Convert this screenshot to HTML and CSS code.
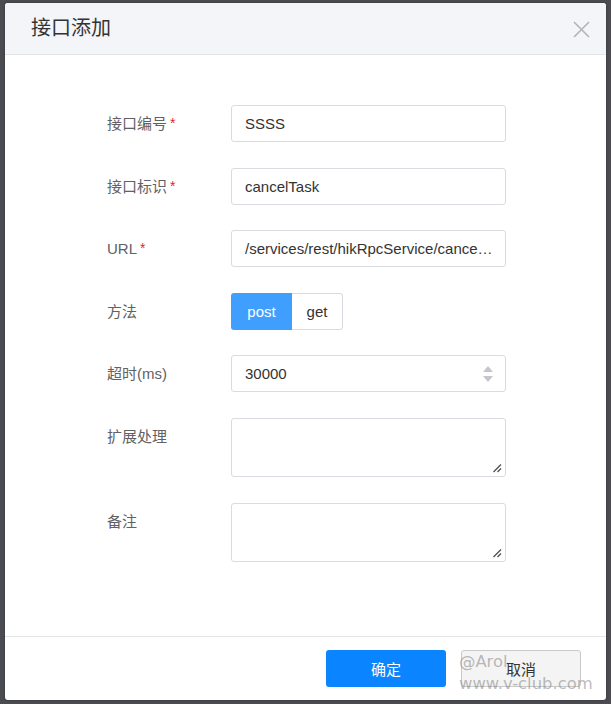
FILE: index.html
```html
<!DOCTYPE html>
<html lang="zh-CN">
<head>
<meta charset="utf-8">
<title>接口添加</title>
<link rel="stylesheet" href="styles.css">
</head>
<body>
<div class="modal">
  <div class="modal-header">
    <span class="modal-title">接口添加</span>
    <svg class="close" width="17" height="17" viewBox="0 0 17 17"><path d="M1 1L16 16M16 1L1 16" stroke="#b4b4b4" stroke-width="1.6" fill="none"/></svg>
  </div>
  <div class="modal-body">
    <div class="row">
      <div class="label">接口编号<span class="req">*</span></div>
      <div class="field"><span class="val">SSSS</span></div>
    </div>
    <div class="row">
      <div class="label">接口标识<span class="req">*</span></div>
      <div class="field"><span class="val">cancelTask</span></div>
    </div>
    <div class="row">
      <div class="label">URL<span class="req">*</span></div>
      <div class="field"><span class="val">/services/rest/hikRpcService/cancelTask</span></div>
    </div>
    <div class="row">
      <div class="label">方法</div>
      <div class="btn-group">
        <span class="seg seg-active">post</span><span class="seg">get</span>
      </div>
    </div>
    <div class="row">
      <div class="label">超时(ms)</div>
      <div class="field">
        <span class="val">30000</span>
        <span class="spinner"><span class="tri-up"></span><span class="tri-down"></span></span>
      </div>
    </div>
    <div class="row row-ta">
      <div class="label">扩展处理</div>
      <div class="textarea ta1"><svg class="grip" width="10" height="10" viewBox="0 0 10 10"><path d="M9 1.5L1.5 9M9 5.5L5.5 9" stroke="#555" stroke-width="1.4" fill="none"/></svg></div>
    </div>
    <div class="row row-ta">
      <div class="label">备注</div>
      <div class="textarea ta2"><svg class="grip" width="10" height="10" viewBox="0 0 10 10"><path d="M9 1.5L1.5 9M9 5.5L5.5 9" stroke="#555" stroke-width="1.4" fill="none"/></svg></div>
    </div>
  </div>
  <div class="modal-footer">
    <span class="btn btn-primary">确定</span>
    <span class="btn btn-default">取消</span>
    <div class="watermark"><div>@Arol</div><div>www.v-club.com</div></div>
  </div>
</div>
</body>
</html>
```

FILE: styles.css
```css
html, body {
  margin: 0;
  padding: 0;
}
body {
  background: #4a4c51;
  width: 611px;
  height: 704px;
  overflow: hidden;
  padding: 3px 5px 0 5px;
  box-sizing: border-box;
  font-family: "Liberation Sans", "Noto Sans CJK SC", sans-serif;
}
.modal {
  width: 601px;
  height: 697px;
  background: #fff;
  border-radius: 3px;
  display: flex;
  flex-direction: column;
  overflow: hidden;
  box-shadow: 0 0 3px rgba(0,0,0,0.3);
}
.modal-header {
  height: 52px;
  box-sizing: border-box;
  background: #f4f5f8;
  border-bottom: 1px solid #e3e4e6;
  display: flex;
  align-items: center;
  justify-content: space-between;
  padding: 0 16px 0 26px;
}
.modal-title {
  font-size: 20px;
  color: #333;
  line-height: 24px;
  margin-top: -1px;
}
.close {
  display: block;
  margin-top: 1px;
}
.modal-body {
  flex: 1;
  padding: 50px 0 0 102px;
  display: flex;
  flex-direction: column;
  gap: 25.5px;
}
.row {
  display: flex;
  align-items: flex-start;
}
.label {
  width: 124px;
  height: 37px;
  flex: none;
  font-size: 15px;
  line-height: 37px;
  color: #606266;
  white-space: nowrap;
}
.req {
  color: #e4262b;
  margin-left: 3px;
  font-size: 14px;
  line-height: 1;
  vertical-align: top;
  position: relative;
  top: 11px;
}
.field {
  width: 275px;
  height: 37px;
  box-sizing: border-box;
  border: 1px solid #d9dbe0;
  border-radius: 3px;
  display: flex;
  align-items: center;
  padding: 0 12px 0 13px;
  font-size: 15px;
  color: #333;
}
.val {
  flex: 1;
  min-width: 0;
  white-space: nowrap;
  overflow: hidden;
  text-overflow: ellipsis;
}
.spinner {
  display: flex;
  flex-direction: column;
  align-items: center;
  gap: 4px;
}
.tri-up, .tri-down {
  width: 0;
  height: 0;
  border-left: 5px solid transparent;
  border-right: 5px solid transparent;
}
.tri-up {
  border-bottom: 6px solid #c4c6cb;
}
.tri-down {
  border-top: 6px solid #c4c6cb;
}
.btn-group {
  display: flex;
  height: 37px;
}
.seg {
  display: flex;
  align-items: center;
  justify-content: center;
  font-size: 15px;
  color: #333;
  box-sizing: border-box;
}
.seg-active {
  width: 61px;
  background: #409eff;
  color: #fff;
  border-radius: 3px 0 0 3px;
}
.seg:not(.seg-active) {
  width: 51px;
  border: 1px solid #d9dbe0;
  border-left: none;
  border-radius: 0 3px 3px 0;
}
.textarea {
  width: 275px;
  box-sizing: border-box;
  border: 1px solid #d9dbe0;
  border-radius: 3px;
  display: flex;
  align-items: flex-end;
  justify-content: flex-end;
  padding: 0 3px 3px 0;
}
.ta1 { height: 59.5px; }
.ta2 { height: 59px; }
.grip { display: block; }
.modal-footer {
  position: relative;
  height: 64px;
  box-sizing: border-box;
  border-top: 1px solid #e4e5e7;
  display: flex;
  align-items: center;
  justify-content: flex-end;
  gap: 15px;
  padding: 0 25px 0 0;
}
.btn {
  width: 120px;
  height: 37px;
  box-sizing: border-box;
  border-radius: 3px;
  display: flex;
  align-items: center;
  justify-content: center;
  font-size: 15px;
}
.btn-primary {
  background: #0b85ff;
  color: #fff;
}
.btn-default {
  background: #f4f4f4;
  border: 1px solid #c9c9c9;
  color: #333;
}
.watermark {
  position: absolute;
  left: 454px;
  top: 14px;
  font-family: "DejaVu Sans", sans-serif;
  font-size: 16.4px;
  line-height: 22px;
  color: rgba(130,130,130,0.55);
  pointer-events: none;
}
```
